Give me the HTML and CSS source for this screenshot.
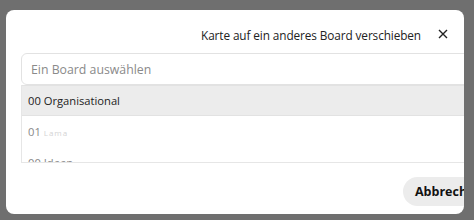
FILE: index.html
```html
<!doctype html>
<html lang="de">
  <head>
    <meta charset="UTF-8" />
    <title>Karte verschieben</title>
    <link rel="stylesheet" href="styles.css">
  </head>
  <body>
    <div class="modal">
      <div class="modal-inner">
        <div class="header">
          <h2 class="title">Karte auf ein anderes Board verschieben</h2>
          <button class="close" aria-label="Schließen">
            <svg width="10" height="10" viewBox="0 0 10 10">
              <path d="M1 1 L9 9 M9 1 L1 9" stroke="#222" stroke-width="1.4" fill="none" />
            </svg>
          </button>
        </div>

        <div class="picker">
          <input class="search" type="text" placeholder="Ein Board auswählen" />
          <ul class="options">
            <li class="option active">00 Organisational</li>
            <li class="option">01 <span class="blurred">Lama</span></li>
            <li class="option">00 Ideen</li>
          </ul>
        </div>

        <div class="footer">
          <button class="cancel">Abbrechen</button>
        </div>
      </div>
    </div>
  </body>
</html>
```

FILE: styles.css
```css
html, body {
  margin: 0;
  height: 100%;
}
body {
  background: #6f6f6f;
  font-family: 'Open Sans', 'Noto Sans', sans-serif;
  color: #222;
  padding: 10px 10px 0 6px;
  box-sizing: border-box;
}
.modal {
  width: 458px;
  height: 204px;
  background: #fff;
  border-radius: 8px;
  overflow: hidden;
}
.modal-inner {
  width: 520px;
  padding: 13px 0 0 15px;
  box-sizing: border-box;
}
.header {
  display: flex;
  align-items: center;
  width: 429px;
  justify-content: flex-end;
  height: 22px;
}
.title {
  margin: 0 15px 0 0;
  font-size: 11.8px;
  font-weight: 400;
  letter-spacing: -0.1px;
  position: relative;
  top: 1px;
}
.close {
  background: none;
  border: none;
  padding: 0;
  width: 14px;
  height: 14px;
  display: flex;
  align-items: center;
  justify-content: center;
  cursor: pointer;
}
.picker {
  margin-top: 8px;
}
.search {
  display: block;
  width: 100%;
  height: 32px;
  box-sizing: border-box;
  border: 1px solid #e2e2e2;
  border-radius: 6px;
  padding: 0 9px;
  font-family: inherit;
  font-size: 12.3px;
  color: #333;
  outline: none;
}
.search::placeholder {
  color: #8a8a8a;
}
.options {
  list-style: none;
  margin: 0;
  padding: 0;
  height: 77px;
  overflow: hidden;
  border-left: 1px solid #e6e6e6;
  border-bottom: 1px solid #e6e6e6;
}
.option {
  height: 31px;
  line-height: 31px;
  padding-left: 6px;
  font-size: 11.2px;
  color: #888;
}
.option.active {
  background: #ececec;
  color: #222;
  border-top: 1px solid #e2e2e2;
  border-bottom: 1px solid #e2e2e2;
  height: 29px;
  line-height: 29px;
}
.blurred {
  color: #d4d4d4;
  font-size: 8px;
  letter-spacing: 1px;
}
.footer {
  margin-top: 14px;
  padding-left: 382px;
}
.cancel {
  height: 29px;
  padding: 0 12px;
  border: none;
  border-radius: 15px;
  background: #ececec;
  font-family: inherit;
  font-size: 12.5px;
  font-weight: 700;
  color: #111;
  cursor: pointer;
}
```
